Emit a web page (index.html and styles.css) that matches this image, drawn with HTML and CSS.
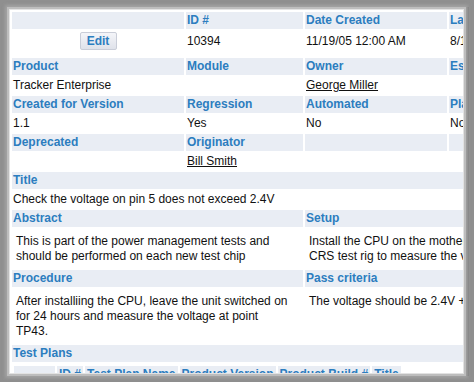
FILE: index.html
```html
<!DOCTYPE html>
<html lang="en">
<head>
  <meta charset="UTF-8">
  <title>Test Case 10394</title>
  <link rel="stylesheet" href="styles.css">
</head>
<body>
  <div class="shot">
    <table class="detail">
      <colgroup>
        <col class="c1"><col class="c2"><col class="c3"><col class="c4">
      </colgroup>
      <tr class="head">
        <td></td><td>ID #</td><td>Date Created</td><td>Last Modified</td>
      </tr>
      <tr class="val first">
        <td class="edit-cell"><button type="button" class="edit">Edit</button></td>
        <td>10394</td><td>11/19/05 12:00 AM</td><td>8/18/06 3:15 PM</td>
      </tr>
      <tr class="head">
        <td>Product</td><td>Module</td><td>Owner</td><td>Estimated Time</td>
      </tr>
      <tr class="val">
        <td>Tracker Enterprise</td><td></td><td><a href="#">George Miller</a></td><td></td>
      </tr>
      <tr class="head">
        <td>Created for Version</td><td>Regression</td><td>Automated</td><td>Platform</td>
      </tr>
      <tr class="val">
        <td>1.1</td><td>Yes</td><td>No</td><td>None</td>
      </tr>
      <tr class="head">
        <td>Deprecated</td><td>Originator</td><td></td><td></td>
      </tr>
      <tr class="val">
        <td></td><td><a href="#">Bill Smith</a></td><td></td><td></td>
      </tr>
      <tr class="head">
        <td colspan="4">Title</td>
      </tr>
      <tr class="val">
        <td colspan="4">Check the voltage on pin 5 does not exceed 2.4V</td>
      </tr>
      <tr class="head">
        <td colspan="2">Abstract</td><td colspan="2">Setup</td>
      </tr>
      <tr class="val">
        <td colspan="2"><div class="para">This is part of the power management tests and should be performed on each new test chip</div></td>
        <td colspan="2"><div class="para">Install the CPU on the motherboard and connect it to the<br>CRS test rig to measure the voltage on each pin</div></td>
      </tr>
      <tr class="head">
        <td colspan="2">Procedure</td><td colspan="2">Pass criteria</td>
      </tr>
      <tr class="val">
        <td colspan="2"><div class="para">After installiing the CPU, leave the unit switched on for 24 hours and measure the voltage at point TP43.</div></td>
        <td colspan="2"><div class="para">The voltage should be 2.4V +/- 0.1V at all times</div></td>
      </tr>
      <tr class="head">
        <td colspan="4">Test Plans</td>
      </tr>
      <tr class="val">
        <td colspan="4" class="plans-cell">
          <table class="plans">
            <tr>
              <td class="pick"></td>
              <td>ID #</td>
              <td>Test Plan Name</td>
              <td>Product Version</td>
              <td>Product Build #</td>
              <td>Title</td>
            </tr>
          </table>
        </td>
      </tr>
    </table>
  </div>
</body>
</html>
```

FILE: styles.css
```css
body {
  margin: 0;
  height: 382px;
  overflow: hidden;
  background-color: #8f8f8f;
  font-family: "Liberation Sans", Arial, sans-serif;
  font-size: 12px;
  color: #111;
}
.shot {
  margin: 10px 0 0 10px;
  width: 453px;
  height: 363px;
  overflow: hidden;
  background-color: #fff;
  box-shadow: 0 0 0 1px #e2e2e2, 0 0 0 3px #bdbdbd, 0 0 3px 5px #a2a2a2, 3px 0 0 3px #7a7a7a;
}
.detail {
  width: 641px;
  table-layout: fixed;
  border-spacing: 2px;
}
.c1 { width: 172px; }
.c2 { width: 117px; }
.c3 { width: 142px; }
.c4 { width: 200px; }
.detail td {
  padding: 1px;
  line-height: 15px;
  white-space: nowrap;
  overflow: hidden;
  vertical-align: top;
}
.head td {
  background-color: #e9edf4;
  color: #2c7dbf;
  font-weight: bold;
}
.val.first td {
  height: 22px;
  padding-top: 3px;
  padding-bottom: 0;
}
.val.first td.edit-cell {
  text-align: center;
  padding-top: 1px;
}
.edit {
  width: 37px;
  height: 18px;
  padding: 0;
  border: 1px solid #c9cdd8;
  border-radius: 2px;
  background: linear-gradient(#f4f5f9, #dfe2ea);
  color: #2c7dbf;
  font-family: "Liberation Sans", Arial, sans-serif;
  font-size: 12px;
  font-weight: bold;
  cursor: pointer;
}
.val a {
  color: #111;
  text-decoration: underline;
}
.detail td .para {
  white-space: normal;
  line-height: 15px;
  padding: 4px 10px 3px 3px;
}
.plans-cell {
  padding: 0 !important;
}
.plans {
  border-spacing: 2px;
}
.plans td {
  background-color: #e9edf4;
  color: #2c7dbf;
  font-weight: bold;
  padding: 1px 2px;
  white-space: nowrap;
}
.plans td.pick {
  width: 37px;
}
```
